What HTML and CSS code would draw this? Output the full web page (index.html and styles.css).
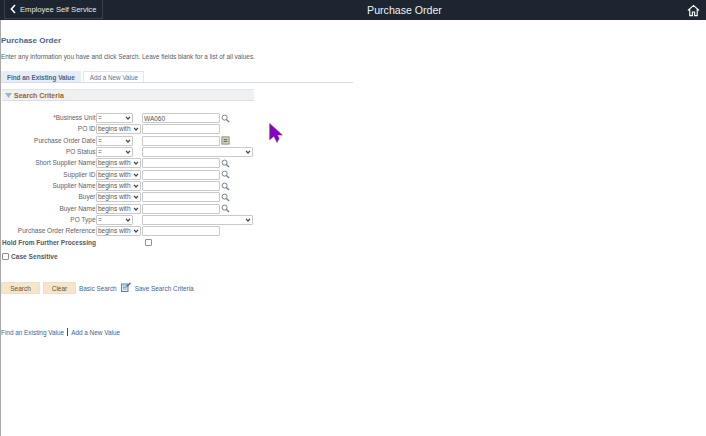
FILE: index.html
```html
<!DOCTYPE html>
<html lang="en">
<head>
<meta charset="utf-8">
<title>Purchase Order</title>
<link rel="stylesheet" href="styles.css">
</head>
<body>
<header class="banner">
  <div class="banner-side banner-left">
    <button class="back-btn" type="button">
      <svg class="back-icon" viewBox="0 0 6 10"><path d="M5 1 1.4 5 5 9" fill="none" stroke="#fff" stroke-width="1.6"/></svg>
      <span>Employee Self Service</span>
    </button>
  </div>
  <div class="banner-title">Purchase Order</div>
  <div class="banner-side banner-right">
    <svg class="home-icon" viewBox="0 0 14 14"><path d="M1 7 7 1.5 13 7M3 5.6V12.5H5.8V8.6H8.2V12.5H11V5.6" fill="none" stroke="#fff" stroke-width="1.2"/></svg>
  </div>
</header>
<main class="page">
  <h1 class="page-title">Purchase Order</h1>
  <p class="intro">Enter any information you have and click Search. Leave fields blank for a list of all values.</p>
  <nav class="tabs">
    <span class="tab tab-active">Find an Existing Value</span>
    <span class="tab">Add a New Value</span>
  </nav>
  <div class="section-bar">
    <svg class="section-arrow" viewBox="0 0 8 6"><path d="M0 0H8L4 6Z" fill="#9db4c8"/></svg>
    <span>Search Criteria</span>
  </div>
  <form class="criteria">
    <label>*Business Unit</label>
    <select class="op-short"><option>=</option></select>
    <input type="text" value="WA060">
    <svg class="lookup" viewBox="0 0 10 10"><circle cx="4" cy="4" r="2.8" fill="none" stroke="#6f7f8c" stroke-width="1.1"/><path d="M6 6 9 9" stroke="#6f7f8c" stroke-width="1.5"/></svg>

    <label>PO ID</label>
    <select class="op"><option>begins with</option></select>
    <input type="text">
    <span></span>

    <label>Purchase Order Date</label>
    <select class="op-short"><option>=</option></select>
    <input type="text">
    <svg class="lookup" viewBox="0 0 10 10"><rect x="1" y="1" width="8" height="8" fill="#cfd6c4" stroke="#7d8a6c"/><path d="M3 4H7M3 6H7" stroke="#4d5a40"/></svg>

    <label>PO Status</label>
    <select class="op-short"><option>=</option></select>
    <select class="value-select"><option></option></select>

    <label>Short Supplier Name</label>
    <select class="op"><option>begins with</option></select>
    <input type="text">
    <svg class="lookup" viewBox="0 0 10 10"><circle cx="4" cy="4" r="2.8" fill="none" stroke="#6f7f8c" stroke-width="1.1"/><path d="M6 6 9 9" stroke="#6f7f8c" stroke-width="1.5"/></svg>

    <label>Supplier ID</label>
    <select class="op"><option>begins with</option></select>
    <input type="text">
    <svg class="lookup" viewBox="0 0 10 10"><circle cx="4" cy="4" r="2.8" fill="none" stroke="#6f7f8c" stroke-width="1.1"/><path d="M6 6 9 9" stroke="#6f7f8c" stroke-width="1.5"/></svg>

    <label>Supplier Name</label>
    <select class="op"><option>begins with</option></select>
    <input type="text">
    <svg class="lookup" viewBox="0 0 10 10"><circle cx="4" cy="4" r="2.8" fill="none" stroke="#6f7f8c" stroke-width="1.1"/><path d="M6 6 9 9" stroke="#6f7f8c" stroke-width="1.5"/></svg>

    <label>Buyer</label>
    <select class="op"><option>begins with</option></select>
    <input type="text">
    <svg class="lookup" viewBox="0 0 10 10"><circle cx="4" cy="4" r="2.8" fill="none" stroke="#6f7f8c" stroke-width="1.1"/><path d="M6 6 9 9" stroke="#6f7f8c" stroke-width="1.5"/></svg>

    <label>Buyer Name</label>
    <select class="op"><option>begins with</option></select>
    <input type="text">
    <svg class="lookup" viewBox="0 0 10 10"><circle cx="4" cy="4" r="2.8" fill="none" stroke="#6f7f8c" stroke-width="1.1"/><path d="M6 6 9 9" stroke="#6f7f8c" stroke-width="1.5"/></svg>

    <label>PO Type</label>
    <select class="op-short"><option>=</option></select>
    <select class="value-select"><option></option></select>

    <label>Purchase Order Reference</label>
    <select class="op"><option>begins with</option></select>
    <input type="text">
    <span></span>

    <label class="bold-label">Hold From Further Processing</label>
    <input class="check hold-check" type="checkbox">
  </form>
  <label class="case-row"><input class="check" type="checkbox"><span>Case Sensitive</span></label>
  <div class="actions">
    <button class="btn btn-search" type="button">Search</button>
    <button class="btn" type="button">Clear</button>
    <a class="link basic-link">Basic Search</a>
    <svg class="save-icon" viewBox="0 0 10 10"><rect x="0.5" y="2" width="6.5" height="7.5" fill="#dfe8f2" stroke="#5c7fa8"/><path d="M2 4H5.5M2 5.5H5.5M2 7H5.5" stroke="#5c7fa8" stroke-width=".6"/><path d="M5 4 9 0.5 10 1.5 6 5Z" fill="#3f6ba3"/></svg>
    <a class="link">Save Search Criteria</a>
  </div>
  <footer class="bottom-links">
    <a class="link">Find an Existing Value</a>
    <span class="divider"></span>
    <a class="link">Add a New Value</a>
  </footer>
  <svg class="cursor" viewBox="0 0 13 19"><path d="M0.5 0.5V16L4.5 12.5 7.5 18.5 9.5 14.8 7.8 11.5 12.5 11.5Z" fill="#8a00c4" stroke="#5d3a6b" stroke-width=".5"/></svg>
</main>
</body>
</html>
```
FILE: styles.css
```css
* { box-sizing: border-box; }
html, body { margin: 0; height: 100%; }
body { background: #fff; font-family: "Liberation Sans", Arial, sans-serif; color: #4d4d4d; overflow: hidden; }
.banner { height: 20px; background: #1c2530; display: flex; align-items: center; justify-content: space-between; color: #fff; }
.banner-side { width: 200px; display: flex; align-items: center; }
.banner-left { width: 367px; }
.banner-right { width: 264px; justify-content: flex-end; padding-right: 6px; }
.back-btn { height: 19px; width: 99px; margin: 0 0 1px 4px; padding: 0 0 0 5px; background: #1c2530; border: 1px solid #38414c; border-top: 0; color: #e8e8e8; display: flex; align-items: center; gap: 4px; font: 7.6px "Liberation Sans", Arial, sans-serif; }
.back-icon { width: 6px; height: 10px; flex: none; }
.banner-title { font-size: 10.6px; color: #f2f2f2; white-space: nowrap; }
.home-icon { width: 13px; height: 13px; }
.page { position: relative; height: 416px; border-left: 1px solid #a9a9a9; }
.page-title { margin: 0; padding-top: 16px; font-size: 8px; line-height: 10px; font-weight: bold; color: #4a5f8c; }
.intro { margin: 6px 0 0; font-size: 6.42px; line-height: 10px; color: #5a5a5a; }
.tabs { display: flex; align-items: flex-end; gap: 2px; margin-top: 9px; width: 352px; height: 12px; border-bottom: 1px solid #d6dde4; }
.tab { height: 11px; padding: 0 5px 0 6px; font-size: 6.3px; line-height: 11px; color: #63708a; border: 1px solid #e2e7ec; border-bottom: 0; }
.tab-active { font-weight: bold; font-size: 6.4px; background: #e6edf6; color: #4f6384; padding: 0 5px; border-color: #e6edf6; }
.section-bar { display: flex; align-items: center; gap: 2px; width: 252px; height: 12px; margin: 6px 0 0 1px; padding-left: 3px; background: #eef0f1; border-top: 1px solid #e2e4e5; border-bottom: 1px solid #dcdedf; font-size: 7px; font-weight: bold; color: #9a6428; }
.section-arrow { width: 7px; height: 5px; }
.criteria { display: grid; grid-template-columns: 95px 46px 78px 10px; grid-auto-rows: 11.33px; align-items: center; column-gap: 0; margin-top: 11.5px; width: 240px; }
.criteria label { padding-right: 0.5px; font-size: 6.5px; line-height: 10px; text-align: right; color: #5d6068; white-space: nowrap; }
.criteria label.bold-label { font-weight: bold; text-align: left; padding-left: 1px; color: #55585f; }
.criteria select, .criteria input[type="text"] { height: 10px; padding: 0 0 0 1px; font: 6.5px/8px "Liberation Sans", Arial, sans-serif; color: #555; background-color: #fff; border: 1px solid #c9c9c9; border-radius: 1px; margin: 0; }
.criteria select { appearance: none; -webkit-appearance: none; padding-right: 6px; background-image: url("data:image/svg+xml,%3Csvg xmlns='http://www.w3.org/2000/svg' width='6' height='4' viewBox='0 0 6 4'%3E%3Cpath d='M1 .8 3 3 5 .8' fill='none' stroke='%23444' stroke-width='1.2'/%3E%3C/svg%3E"); background-repeat: no-repeat; background-position: right 1px center; background-size: 6px 4px; }
.criteria .op { width: 45px; }
.criteria .op-short { width: 37px; }
.criteria input[type="text"] { width: 78px; }
.criteria .value-select { grid-column: span 2; width: 111px; }
.lookup { width: 9px; height: 9px; margin-left: 1px; }
.check { appearance: none; -webkit-appearance: none; width: 7px; height: 7px; margin: 0; background: #fff; border: 1px solid #8f8f8f; border-radius: 1px; }
.criteria .hold-check { grid-column: 3; margin-left: 3px; }
.criteria .bold-label { grid-column: 1 / 3; }
.case-row { display: flex; align-items: center; gap: 2px; margin: 3px 0 0 1px; height: 10px; font-size: 6.6px; font-weight: bold; color: #55585f; }
.actions { display: flex; align-items: center; margin-top: 21px; height: 12px; }
.btn { height: 12px; width: 39px; padding: 0; margin-right: 3px; background: #f7e5c8; border: 1px solid #ece0cc; font: 6.5px "Liberation Sans", Arial, sans-serif; color: #5e5340; }
.btn + .btn { width: 33px; }
.link { font-size: 6.4px; color: #3d6594; white-space: nowrap; }
.basic-link { margin-left: 0; }
.save-icon { width: 10px; height: 10px; margin: 0 4px 2px 4px; }
.bottom-links { display: flex; align-items: center; gap: 3px; margin-top: 33px; height: 10px; }
.divider { width: 1px; height: 8px; background: #8c2f3a; }
.cursor { position: absolute; left: 268px; top: 103px; width: 14px; height: 20px; }
```
